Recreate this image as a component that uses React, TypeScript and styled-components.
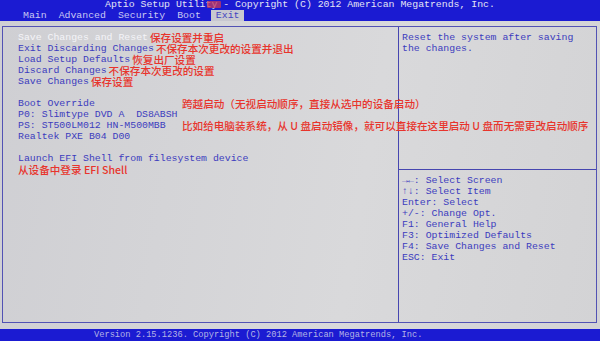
import React from 'react';
import styled, { createGlobalStyle } from 'styled-components';

const Global = createGlobalStyle`
  html, body { margin: 0; padding: 0; background: #d4d4d6; }
  body { width: 600px; height: 341px; overflow: hidden; }
`;

const mono = `"Liberation Mono", "DejaVu Sans Mono", monospace`;
const cjk = `"Noto Sans CJK SC", "Noto Sans", sans-serif`;

const Screen = styled.div`
  width: 600px;
  height: 341px;
  display: flex;
  flex-direction: column;
  font-family: ${mono};
  font-size: 9.85px;
  overflow: hidden;
`;

const TopBar = styled.div`
  height: 21px;
  background: #1b1bd2;
  display: flex;
  flex-direction: column;
  position: relative;
`;

const Title = styled.div`
  height: 10px;
  line-height: 10px;
  text-align: center;
  color: #e4e4f4;
`;

const Stamp = styled.span`
  position: absolute;
  left: 207px;
  top: 1px;
  width: 14px;
  height: 7px;
  background: #c83a5a;
  opacity: 0.75;
  border-radius: 1px;
`;

const Tabs = styled.div`
  display: flex;
  height: 11px;
  padding-left: 17px;
`;

const Tab = styled.div<{ $active?: boolean }>`
  padding: 0 ${p => (p.$active ? '5px' : '6px')};
  line-height: 12px;
  color: ${p => (p.$active ? '#4444c0' : '#c8c8f2')};
  background: ${p => (p.$active ? '#c8c8d0' : 'transparent')};
  margin-left: ${p => (p.$active ? '4px' : '0')};
`;

const Body = styled.div`
  flex: 1;
  padding: 5px 3px 6px 2px;
  background: linear-gradient(100deg, #cfcfd3 0%, #d9d9db 60%, #d3d3d5 100%);
`;

const Frame = styled.div`
  height: 100%;
  box-sizing: border-box;
  border: 1px solid #5252b4;
  display: grid;
  grid-template-columns: 396px 1fr;
`;

const LeftPane = styled.div`
  padding: 5px 0 0 15px;
  border-right: 1px solid #4646b0;
`;

const Row = styled.div<{ $selected?: boolean }>`
  height: 11px;
  line-height: 11px;
  white-space: pre;
  color: ${p => (p.$selected ? '#f4f4f8' : '#3c3cbe')};
  display: flex;
  align-items: center;
`;

const Gap = styled.div<{ $h: number }>`
  height: ${p => p.$h}px;
`;

const Note = styled.span<{ $flush?: boolean }>`
  font-family: ${cjk};
  font-size: 10.6px;
  font-weight: 500;
  line-height: 11px;
  color: #e8342c;
  white-space: nowrap;
  margin-left: ${p => (p.$flush ? '0' : '2px')};
`;

const OverrideRow = styled(Row)`
  display: grid;
  grid-template-columns: 162px auto;
`;

const RightPane = styled.div`
  display: grid;
  grid-template-rows: 143px 1fr;
`;

const Help = styled.div`
  padding: 5px 0 0 3px;
  border-bottom: 1px solid #4646b0;
  color: #3c3cbe;
  line-height: 11px;
`;

const Keys = styled.div`
  padding: 5px 0 0 3px;
`;

const KeyRow = styled.div`
  height: 11px;
  line-height: 11px;
  color: #3c3cbe;
  white-space: pre;
`;

const Footer = styled.div`
  height: 12px;
  background: #1b1bd2;
  color: #b4b4e6;
  font-size: 8.7px;
  line-height: 12px;
  padding-left: 94px;
  white-space: nowrap;
`;

const exitItems = [
  { label: 'Save Changes and Reset', note: '保存设置并重启', selected: true },
  { label: 'Exit Discarding Changes', note: '不保存本次更改的设置并退出' },
  { label: 'Load Setup Defaults', note: '恢复出厂设置' },
  { label: 'Discard Changes', note: '不保存本次更改的设置' },
  { label: 'Save Changes', note: '保存设置' },
];

const overrides = [
  { label: 'Boot Override', note: '跨越启动（无视启动顺序，直接从选中的设备启动）' },
  { label: 'P0: Slimtype DVD A  DS8ABSH', note: '' },
  { label: 'PS: ST500LM012 HN-M500MBB', note: '比如给电脑装系统，从 U 盘启动镜像，就可以直接在这里启动 U 盘而无需更改启动顺序' },
  { label: 'Realtek PXE B04 D00', note: '' },
];

const keys = [
  '→←: Select Screen',
  '↑↓: Select Item',
  'Enter: Select',
  '+/-: Change Opt.',
  'F1: General Help',
  'F3: Optimized Defaults',
  'F4: Save Changes and Reset',
  'ESC: Exit',
];

export default function App() {
  return (
    <Screen>
      <Global />
      <TopBar>
        <Title>Aptio Setup Utility - Copyright (C) 2012 American Megatrends, Inc.</Title>
        <Stamp />
        <Tabs>
          <Tab>Main</Tab>
          <Tab>Advanced</Tab>
          <Tab>Security</Tab>
          <Tab>Boot</Tab>
          <Tab $active>Exit</Tab>
        </Tabs>
      </TopBar>
      <Body>
        <Frame>
          <LeftPane>
            {exitItems.map(item => (
              <Row key={item.label} $selected={item.selected}>
                {item.label}
                <Note>{item.note}</Note>
              </Row>
            ))}
            <Gap $h={11} />
            {overrides.map(item => (
              <OverrideRow key={item.label}>
                <span>{item.label}</span>
                <Note>{item.note}</Note>
              </OverrideRow>
            ))}
            <Gap $h={11} />
            <Row>Launch EFI Shell from filesystem device</Row>
            <Row>
              <Note $flush>从设备中登录 EFI Shell</Note>
            </Row>
          </LeftPane>
          <RightPane>
            <Help>
              Reset the system after saving
              <br />
              the changes.
            </Help>
            <Keys>
              {keys.map(k => (
                <KeyRow key={k}>{k}</KeyRow>
              ))}
            </Keys>
          </RightPane>
        </Frame>
      </Body>
      <Footer>Version 2.15.1236. Copyright (C) 2012 American Megatrends, Inc.</Footer>
    </Screen>
  );
}
